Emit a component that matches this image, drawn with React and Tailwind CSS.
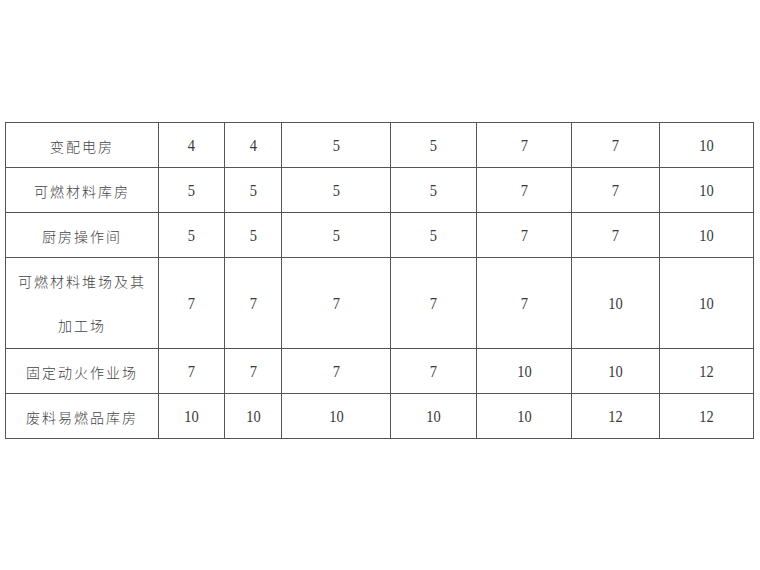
const cols = [153, 66, 57, 109, 86, 95, 88, 94];

const rows = [
  { name: ["变配电房"], vals: ["4", "4", "5", "5", "7", "7", "10"], h: 45 },
  { name: ["可燃材料库房"], vals: ["5", "5", "5", "5", "7", "7", "10"], h: 45 },
  { name: ["厨房操作间"], vals: ["5", "5", "5", "5", "7", "7", "10"], h: 45 },
  { name: ["可燃材料堆场及其", "加工场"], vals: ["7", "7", "7", "7", "7", "10", "10"], h: 91 },
  { name: ["固定动火作业场"], vals: ["7", "7", "7", "7", "10", "10", "12"], h: 45 },
  { name: ["废料易燃品库房"], vals: ["10", "10", "10", "10", "10", "12", "12"], h: 45 },
];

export default function App() {
  return (
    <div className="w-[760px] h-[570px] bg-white pt-[122px] pl-[5px]">
      <table className="table-fixed border-collapse w-[748px] text-[#3a3a3a]">
        <colgroup>
          {cols.map((w, i) => (
            <col key={i} style={{ width: w }} />
          ))}
        </colgroup>
        <tbody>
          {rows.map((r, i) => (
            <tr key={i} style={{ height: r.h }}>
              <td className="border border-[#555] p-0 text-center align-middle">
                {r.name.map((line, j) => (
                  <div
                    key={j}
                    className={`font-['Noto_Sans_CJK_SC',sans-serif] font-light text-[14px] tracking-[2px] text-[#444] ${
                      r.name.length > 1 ? "leading-[44px]" : "leading-[20px] pt-[2px]"
                    }`}
                  >
                    {line}
                  </div>
                ))}
              </td>
              {r.vals.map((v, j) => (
                <td
                  key={j}
                  className="border border-[#555] p-0 text-center align-middle font-['Liberation_Serif',serif] text-[17px] leading-[20px]"
                >
                  <span className="inline-block scale-x-[0.85] pt-[2px]">{v}</span>
                </td>
              ))}
            </tr>
          ))}
        </tbody>
      </table>
    </div>
  );
}
